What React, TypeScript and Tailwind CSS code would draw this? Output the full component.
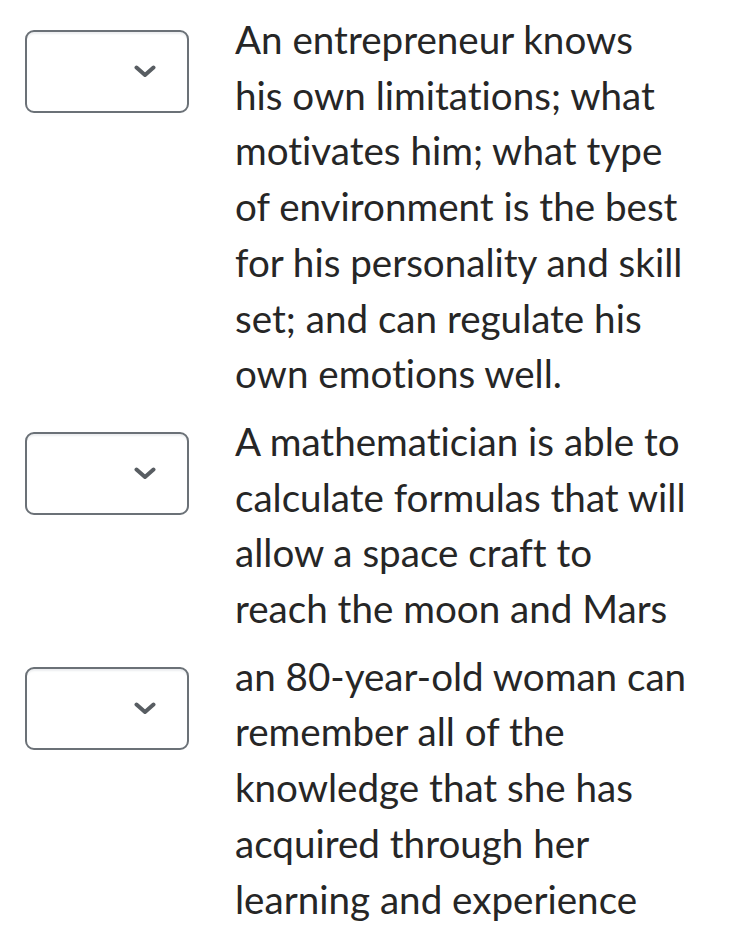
const rows: string[][] = [
  [
    "An entrepreneur knows",
    "his own limitations; what",
    "motivates him; what type",
    "of environment is the best",
    "for his personality and skill",
    "set; and can regulate his",
    "own emotions well.",
  ],
  [
    "A mathematician is able to",
    "calculate formulas that will",
    "allow a space craft to",
    "reach the moon and Mars",
  ],
  [
    "an 80-year-old woman can",
    "remember all of the",
    "knowledge that she has",
    "acquired through her",
    "learning and experience",
  ],
];

function SelectBox() {
  return (
    <div className="mt-[18px] flex h-[83px] w-[164px] shrink-0 items-center justify-end rounded-[9px] border-2 border-[#6b7177] bg-white pr-[31px] shadow-[inset_0_3px_2px_-1px_#eceef0]">
      <svg width="22" height="13" viewBox="0 0 22 13" fill="none">
        <path
          d="M2.5 2.5 L11 10 L19.5 2.5"
          stroke="#585d62"
          strokeWidth="4"
          strokeLinecap="round"
          strokeLinejoin="round"
        />
      </svg>
    </div>
  );
}

export default function App() {
  return (
    <div className="flex min-h-[926px] w-[730px] flex-col gap-[12px] bg-white pl-[25px] pt-[12px] font-['Lato','Noto_Sans',sans-serif] text-[38.6px] leading-[55.7px] text-[#262626] [font-variant-ligatures:none]">
      {rows.map((lines, i) => (
        <div key={i} className="flex items-start gap-[46px]">
          <SelectBox />
          <div>
            {lines.map((l) => (
              <div key={l} className="whitespace-nowrap">
                {l}
              </div>
            ))}
          </div>
        </div>
      ))}
    </div>
  );
}
